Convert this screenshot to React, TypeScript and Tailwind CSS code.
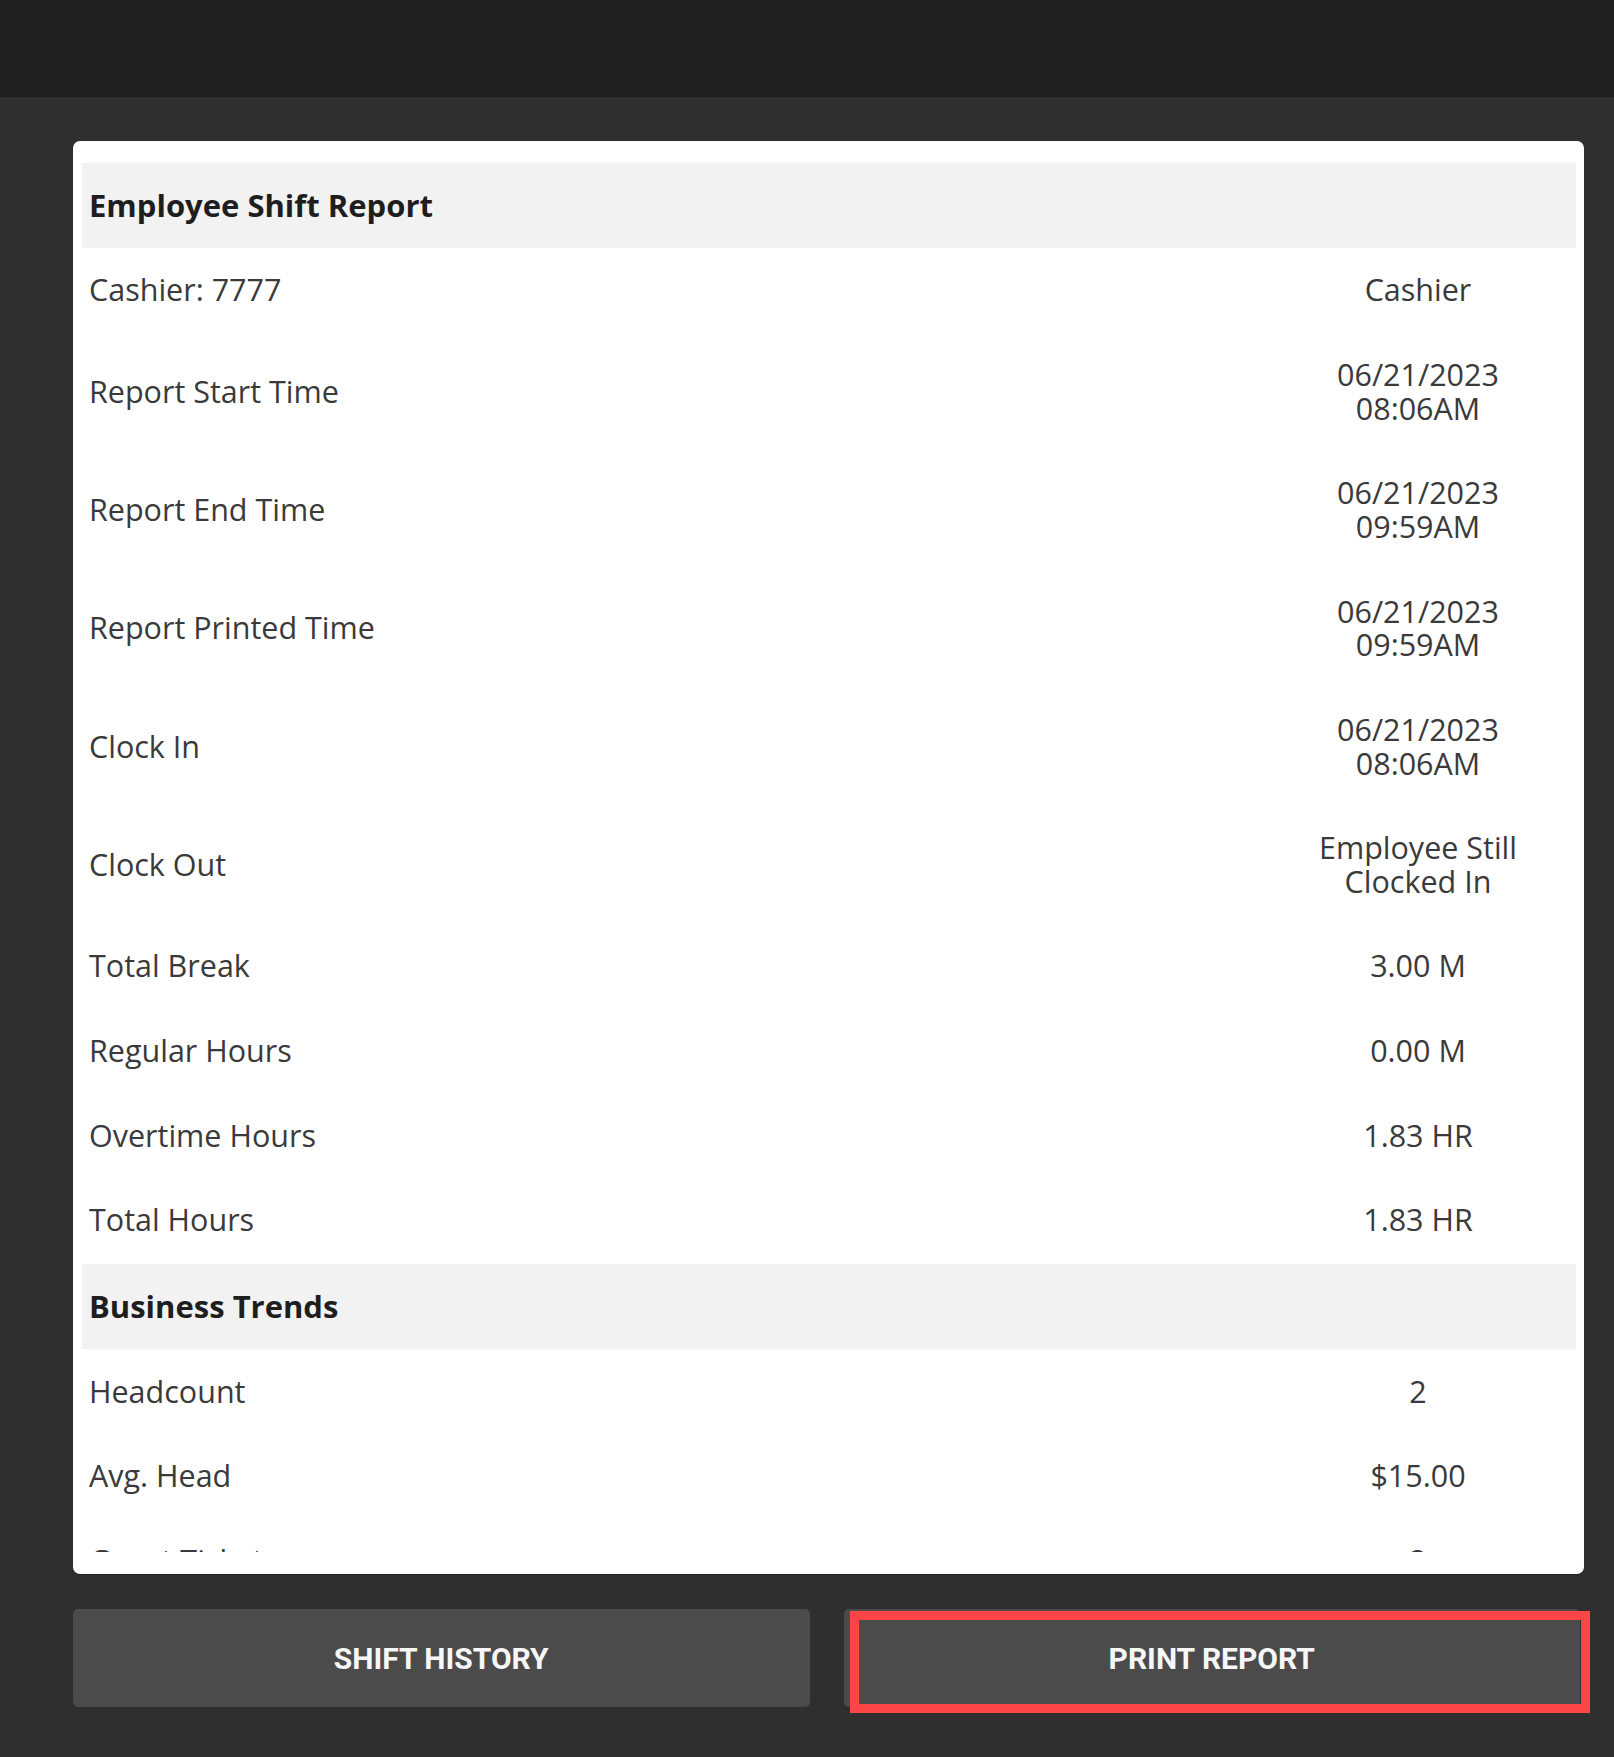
import React from "react";

type Row = { label: string; value: string[] };

const shiftRows: Row[] = [
  { label: "Cashier: 7777", value: ["Cashier"] },
  { label: "Report Start Time", value: ["06/21/2023", "08:06AM"] },
  { label: "Report End Time", value: ["06/21/2023", "09:59AM"] },
  { label: "Report Printed Time", value: ["06/21/2023", "09:59AM"] },
  { label: "Clock In", value: ["06/21/2023", "08:06AM"] },
  { label: "Clock Out", value: ["Employee Still", "Clocked In"] },
  { label: "Total Break", value: ["3.00 M"] },
  { label: "Regular Hours", value: ["0.00 M"] },
  { label: "Overtime Hours", value: ["1.83 HR"] },
  { label: "Total Hours", value: ["1.83 HR"] },
];

const trendRows: Row[] = [
  { label: "Headcount", value: ["2"] },
  { label: "Avg. Head", value: ["$15.00"] },
  { label: "Guest Tickets", value: ["2"] },
];

function SectionHeader({ title }: { title: string }) {
  return (
    <div className="flex h-[85px] items-center bg-[#f2f2f2] pl-[7px]">
      <span className="text-[31px] font-bold leading-none text-[#1e1e1e]">{title}</span>
    </div>
  );
}

function ReportRow({ row }: { row: Row }) {
  return (
    <div className="flex items-center py-[25.45px] pl-[7px] pr-[38px] text-[30.5px] leading-[33.7px] text-[#3a3a3a]">
      <div className="flex-1">{row.label}</div>
      <div className="w-[240px] text-center">
        {row.value.map((v, i) => (
          <div key={i}>{v}</div>
        ))}
      </div>
    </div>
  );
}

export default function App() {
  return (
    <div
      className="flex min-h-[1757px] w-full flex-col bg-[#2f2f2f]"
      style={{ fontFamily: '"Open Sans", "Noto Sans", sans-serif' }}
    >
      <div className="h-[97px] w-full bg-[#202020]" />
      <div className="flex flex-col pl-[73px] pr-[30px]">
        <div className="mt-[44px] h-[1433px] rounded-[7px] bg-white pb-[22px] pl-[9px] pr-[8px] pt-[22px] shadow-[0_1px_1px_rgba(0,0,0,0.35)]">
          <div className="h-full overflow-hidden">
            <SectionHeader title="Employee Shift Report" />
            {shiftRows.map((r) => (
              <ReportRow key={r.label} row={r} />
            ))}
            <div className="pt-[2px]" />
            <SectionHeader title="Business Trends" />
            {trendRows.map((r) => (
              <ReportRow key={r.label} row={r} />
            ))}
          </div>
        </div>
        <div
          className="mt-[35px] flex gap-[34px] pr-[4px]"
          style={{ fontFamily: 'Roboto, "Liberation Sans", sans-serif' }}
        >
          <button className="flex h-[98px] flex-1 items-center justify-center rounded-[5px] bg-[#4b4b4b] text-[30px] font-bold text-[#f7f7f7]">
            SHIFT HISTORY
          </button>
          <div className="relative flex-1">
            <button className="flex h-[98px] w-full items-center justify-center rounded-[5px] bg-[#4b4b4b] text-[30px] font-bold text-[#f7f7f7]">
              PRINT REPORT
            </button>
            <div className="pointer-events-none absolute bottom-[-6px] left-[6px] right-[-10px] top-[2px] border-[9px] border-[#fd4446]" />
          </div>
        </div>
      </div>
    </div>
  );
}
